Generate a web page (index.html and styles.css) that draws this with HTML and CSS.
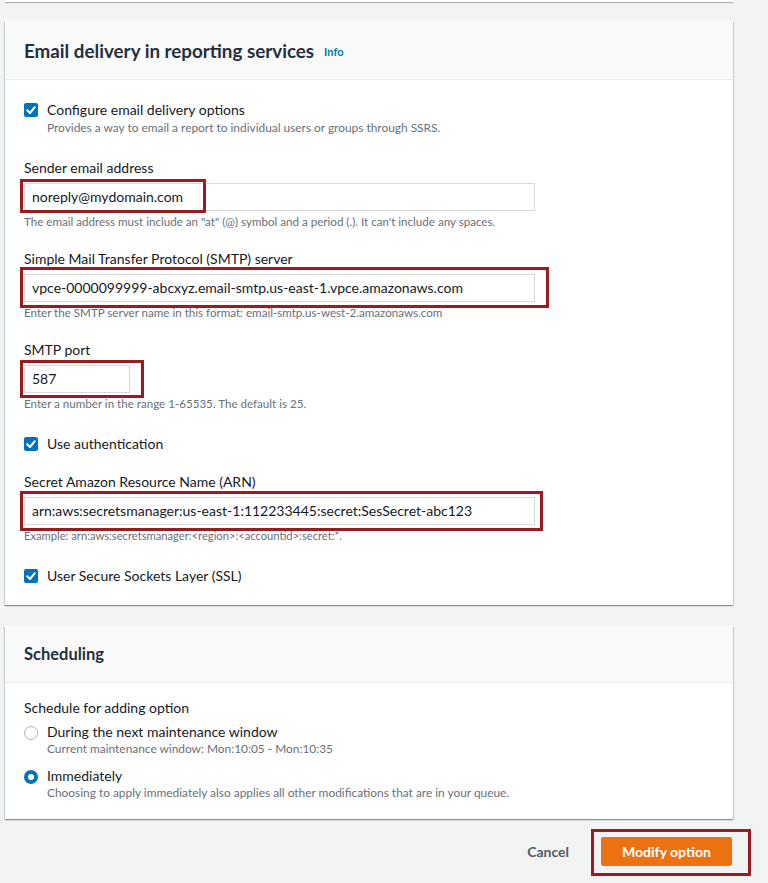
FILE: index.html
```html
<!DOCTYPE html>
<html lang="en">
<head>
<meta charset="utf-8">
<title>Email delivery in reporting services</title>
<link rel="stylesheet" href="styles.css">
</head>
<body>
<div class="page">
  <div class="prev-card"></div>

  <section class="card">
    <header class="card-head">
      <h2>Email delivery in reporting services</h2>
      <a class="info" href="#">Info</a>
    </header>
    <div class="card-body">
      <div class="check">
        <span class="box"><svg viewBox="0 0 14 14" width="14" height="14"><path d="M3.2 7.2 L6 10 L10.8 4.2" fill="none" stroke="#fff" stroke-width="2" stroke-linecap="round" stroke-linejoin="round"/></svg></span>
        <div class="check-text">
          <div class="check-label">Configure email delivery options</div>
          <div class="desc">Provides a way to email a report to individual users or groups through SSRS.</div>
        </div>
      </div>

      <div class="field">
        <div class="label">Sender email address</div>
        <div class="input-wrap">
          <div class="input">noreply@mydomain.com</div>
          <span class="mark mark-sender"></span>
        </div>
        <div class="help">The email address must include an "at" (@) symbol and a period (.). It can't include any spaces.</div>
      </div>

      <div class="field">
        <div class="label">Simple Mail Transfer Protocol (SMTP) server</div>
        <div class="input-wrap">
          <div class="input">vpce-0000099999-abcxyz.email-smtp.us-east-1.vpce.amazonaws.com</div>
          <span class="mark mark-smtp"></span>
        </div>
        <div class="help">Enter the SMTP server name in this format: email-smtp.us-west-2.amazonaws.com</div>
      </div>

      <div class="field">
        <div class="label">SMTP port</div>
        <div class="input-wrap">
          <div class="input input-short">587</div>
          <span class="mark mark-port"></span>
        </div>
        <div class="help">Enter a number in the range 1-65535. The default is 25.</div>
      </div>

      <div class="check check-spaced">
        <span class="box"><svg viewBox="0 0 14 14" width="14" height="14"><path d="M3.2 7.2 L6 10 L10.8 4.2" fill="none" stroke="#fff" stroke-width="2" stroke-linecap="round" stroke-linejoin="round"/></svg></span>
        <div class="check-text">
          <div class="check-label">Use authentication</div>
        </div>
      </div>

      <div class="field field-tight">
        <div class="label">Secret Amazon Resource Name (ARN)</div>
        <div class="input-wrap">
          <div class="input">arn:aws:secretsmanager:us-east-1:112233445:secret:SesSecret-abc123</div>
          <span class="mark mark-arn"></span>
        </div>
        <div class="help help-example">Example: arn:aws:secretsmanager:&lt;region&gt;:&lt;accountid&gt;:secret:*.</div>
      </div>

      <div class="check check-spaced">
        <span class="box"><svg viewBox="0 0 14 14" width="14" height="14"><path d="M3.2 7.2 L6 10 L10.8 4.2" fill="none" stroke="#fff" stroke-width="2" stroke-linecap="round" stroke-linejoin="round"/></svg></span>
        <div class="check-text">
          <div class="check-label">User Secure Sockets Layer (SSL)</div>
        </div>
      </div>
    </div>
  </section>

  <section class="card card-sched">
    <header class="card-head card-head-sched">
      <h2 class="h-sched">Scheduling</h2>
    </header>
    <div class="card-body sched-body">
      <div class="label">Schedule for adding option</div>
      <div class="radio">
        <span class="dot"></span>
        <div class="check-text">
          <div class="check-label">During the next maintenance window</div>
          <div class="desc">Current maintenance window: Mon:10:05 - Mon:10:35</div>
        </div>
      </div>
      <div class="radio radio-2">
        <span class="dot dot-on"></span>
        <div class="check-text">
          <div class="check-label">Immediately</div>
          <div class="desc">Choosing to apply immediately also applies all other modifications that are in your queue.</div>
        </div>
      </div>
    </div>
  </section>

  <div class="actions">
    <button class="btn-link">Cancel</button>
    <div class="primary-wrap">
      <button class="btn-primary">Modify option</button>
      <span class="mark mark-btn"></span>
    </div>
  </div>
</div>
</body>
</html>
```

FILE: styles.css
```css
* { box-sizing: border-box; }

html, body {
  margin: 0;
  padding: 0;
  background: #f2f3f3;
}

body {
  font-family: Lato, "Open Sans", "Liberation Sans", sans-serif;
  color: #16191f;
  width: 768px;
  height: 883px;
  overflow: hidden;
}

.page {
  padding-left: 5px;
  width: 733px;
}

.prev-card {
  height: 2px;
  background: #fff;
  box-shadow: 0 1px 1px 0 rgba(0, 28, 36, 0.35);
  margin-bottom: 19px;
}

.card {
  background: #fff;
  box-shadow: 0 1px 1px 0 rgba(0, 28, 36, 0.3), 1px 1px 1px 0 rgba(0, 28, 36, 0.12), -1px 1px 1px 0 rgba(0, 28, 36, 0.12);
}

.card-head {
  background: #fafafa;
  border-bottom: 1px solid #eaeded;
  height: 59px;
  padding: 0 19px;
  display: flex;
  align-items: center;
  gap: 10px;
}

.card-head h2 {
  margin: 0;
  font-size: 18.8px;
  font-weight: 700;
  color: #232f3e;
}

.info {
  font-size: 11px;
  font-weight: 700;
  color: #0073bb;
  text-decoration: none;
  margin-top: 3px;
}

.card-body {
  padding: 20px 19px 19px;
}

.check, .radio {
  display: flex;
  align-items: flex-start;
  gap: 9px;
}

.box {
  width: 14px;
  height: 14px;
  border-radius: 2px;
  background: #0073bb;
  flex: none;
  margin-top: 3px;
  display: flex;
}

.check-label {
  font-size: 14px;
  line-height: 20px;
  color: #16191f;
}

.desc {
  font-size: 11.9px;
  line-height: 16px;
  color: #687078;
}

.field {
  margin-top: 22px;
}

.field + .field {
  margin-top: 19px;
}

.field-tight {
  margin-top: 18px;
}

.label {
  font-size: 14px;
  line-height: 20px;
  color: #16191f;
}

.input-wrap {
  position: relative;
  margin-top: 5px;
}

.input {
  width: 511px;
  height: 28px;
  border: 1px solid #d5dbdb;
  background: #fff;
  padding: 0 7px;
  font-size: 14px;
  line-height: 26px;
  color: #16191f;
  white-space: nowrap;
  overflow: hidden;
}

.input-short {
  width: 106px;
}

.help {
  margin-top: 3px;
  font-size: 11.6px;
  line-height: 16px;
  color: #687078;
}

.help-example {
  font-size: 11.2px;
}

.check-spaced {
  margin-top: 22px;
}

.mark {
  position: absolute;
  border: 3px solid #9a1b20;
  pointer-events: none;
}

.mark-sender { left: -4px; top: -4px; width: 186px; height: 34px; }
.mark-smtp   { left: -4px; top: -7px; width: 529px; height: 41px; }
.mark-port   { left: -4px; top: -5px; width: 124px; height: 38px; }
.mark-arn    { left: -4px; top: -6px; width: 523px; height: 40px; }

.card-sched {
  margin-top: 21px;
}

.card-head-sched {
  height: 57px;
}

.card-head .h-sched {
  font-size: 16.5px;
}

.sched-body {
  padding: 15px 19px 18px;
}

.radio {
  margin-top: 5px;
}

.radio-2 {
  margin-top: 10px;
}

.dot {
  width: 14px;
  height: 14px;
  border-radius: 50%;
  border: 1px solid #aab7b8;
  background: #fff;
  flex: none;
  margin-top: 3px;
}

.dot-on {
  border: 4px solid #0073bb;
}

.radio .check-label {
  line-height: 18px;
}

.actions {
  margin-top: 18px;
  display: flex;
  justify-content: flex-end;
  align-items: center;
  gap: 12px;
  padding-right: 1px;
}

.btn-link {
  border: none;
  background: none;
  font-family: inherit;
  font-size: 14px;
  font-weight: 700;
  color: #545b64;
  padding: 4px 20px;
  cursor: pointer;
}

.primary-wrap {
  position: relative;
}

.btn-primary {
  display: block;
  width: 131px;
  height: 29px;
  border: 1px solid #ec7211;
  border-radius: 2px;
  background: #ec7211;
  color: #fff;
  font-family: inherit;
  font-size: 14px;
  font-weight: 700;
  cursor: pointer;
}

.mark-btn { left: -10px; top: -8px; right: -19px; bottom: -10px; }
```
